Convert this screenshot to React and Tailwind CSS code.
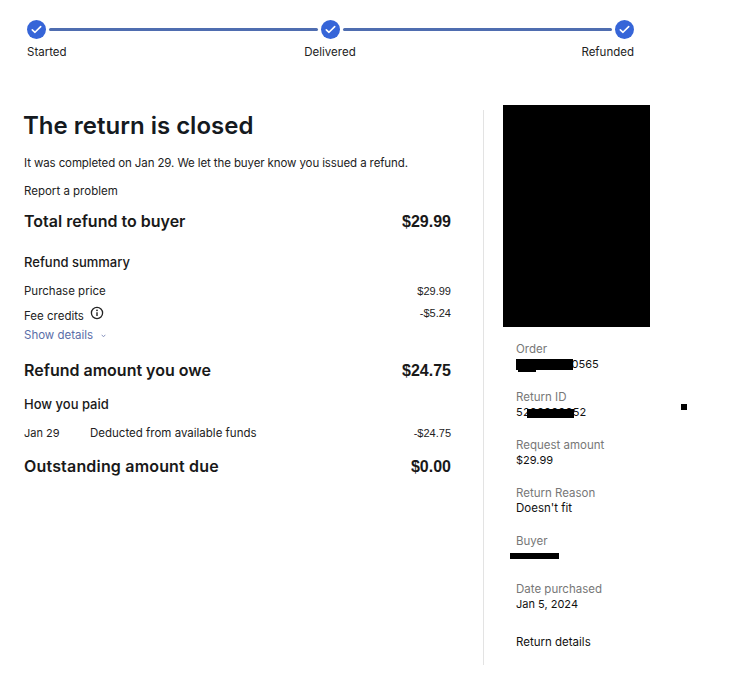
import React from "react";

function StepDot() {
  return (
    <div className="flex h-[19px] w-[19px] shrink-0 items-center justify-center rounded-full bg-[#3665d8]">
      <svg width="11" height="9" viewBox="0 0 11 9" fill="none">
        <path d="M1.3 4.8 L4 7.3 L9.7 1.6" stroke="#fff" strokeWidth="1.6" strokeLinecap="round" strokeLinejoin="round" />
      </svg>
    </div>
  );
}

function Stepper() {
  return (
    <div className="pl-[27px] pt-5 w-[634px] box-content">
      <div className="flex items-center w-[607px]">
        <StepDot />
        <div className="mx-[3px] h-[3px] flex-1 rounded-full bg-[#4f6db0]" />
        <StepDot />
        <div className="mx-[3px] h-[3px] flex-1 rounded-full bg-[#4f6db0]" />
        <StepDot />
      </div>
      <div className="mt-[6px] flex w-[607px] justify-between text-[11.5px] leading-[14px] text-[#222]">
        <span>Started</span>
        <span className="ml-[12px]">Delivered</span>
        <span>Refunded</span>
      </div>
    </div>
  );
}

function TotalRow({ label, amount, wide }) {
  return (
    <div className="flex items-center justify-between">
      <span className={wide ? "text-[16px] font-semibold leading-5 tracking-[0.18px] text-[#191919]" : "text-[16px] font-semibold leading-5 text-[#191919]"}>
        {label}
      </span>
      <span className="translate-y-[1px] font-['Liberation_Sans'] text-[16px] font-bold leading-5 text-[#191919]">{amount}</span>
    </div>
  );
}

function Detail({ label, numeric, children }) {
  return (
    <div className="h-[48px]">
      <div className="text-[11.5px] leading-[15px] text-[#777]">{label}</div>
      <div className={numeric ? "text-[11px] leading-[15px] text-[#111]" : "text-[11.5px] leading-[15px] text-[#111]"}>
        {children}
      </div>
    </div>
  );
}

function Redact({ className }) {
  return <span className={"absolute bg-black " + className} />;
}

export default function App() {
  return (
    <div className="relative h-[675px] w-[740px] overflow-hidden bg-white font-['Inter',sans-serif]">
      <Stepper />

      <div className="mt-[46px] flex">
        {/* main column */}
        <div className="ml-6 w-[427px] text-[11.5px] text-[#222]">
          <h1 className="ml-[-1px] mt-[6px] text-[24px] font-semibold leading-[30px] text-[#151a1f]">The return is closed</h1>
          <p className="mt-[14px] leading-4 tracking-[-0.11px]">It was completed on Jan 29. We let the buyer know you issued a refund.</p>
          <p className="mt-[12px] leading-4">Report a problem</p>
          <div className="mt-[12px]">
            <TotalRow label="Total refund to buyer" amount="$29.99" />
          </div>
          <h2 className="mt-[22px] text-[13px] font-medium leading-[18px] text-[#191919]">Refund summary</h2>
          <div className="mt-[12px] flex justify-between leading-4">
            <span>Purchase price</span>
            <span className="font-['Liberation_Sans'] text-[11px]">$29.99</span>
          </div>
          <div className="mt-[6px] flex justify-between leading-4">
            <span className="flex items-center gap-[6px]">
              <span className="translate-y-[1px] pt-[2px]">Fee credits</span>
              <svg width="14" height="14" viewBox="0 0 14 14" fill="none" className="mt-[-3px]">
                <circle cx="7" cy="7" r="5.6" stroke="#222" strokeWidth="1.3" />
                <path d="M7 6.2 V10" stroke="#222" strokeWidth="1.4" />
                <circle cx="7" cy="4.3" r="0.9" fill="#222" />
              </svg>
            </span>
            <span className="font-['Liberation_Sans'] text-[11px]">-$5.24</span>
          </div>
          <div className="mt-[4px] flex items-center gap-[8px] leading-4 text-[#5a6ea8]">
            <span>Show details</span>
            <svg width="5" height="4" viewBox="0 0 5 4" fill="none" className="mt-[2px]">
              <path d="M0.7 0.8 L2.5 2.8 L4.3 0.8" stroke="#7a88b8" strokeWidth="0.9" />
            </svg>
          </div>
          <div className="mt-[17px]">
            <TotalRow label="Refund amount you owe" amount="$24.75" />
          </div>
          <h2 className="mt-[15px] text-[13px] font-medium leading-[18px] text-[#191919]">How you paid</h2>
          <div className="mt-[12px] flex leading-4">
            <span className="w-[66px] text-[11px]">Jan 29</span>
            <span className="flex-1">Deducted from available funds</span>
            <span className="font-['Liberation_Sans'] text-[11px]">-$24.75</span>
          </div>
          <div className="mt-[15px]">
            <TotalRow label="Outstanding amount due" amount="$0.00" wide />
          </div>
        </div>

        {/* side column */}
        <div className="ml-[32px] mt-[5px] h-[555px] w-px bg-[#e3e3e3]" />
        <div className="ml-[19px]">
          <div className="h-[222px] w-[147px] bg-black" />
          <div className="ml-[13px] mt-[15px]">
            <Detail label="Order" numeric>
              <span className="relative">
                000000000565
                <Redact className="left-0 top-[2px] h-[11px] w-[57px]" />
                <Redact className="left-[2px] top-[8px] h-[7px] w-[18px]" />
              </span>
            </Detail>
            <Detail label="Return ID" numeric>
              <span className="relative tracking-[0.2px]">
                5200000052
                <Redact className="left-[11px] top-[4px] h-[9px] w-[47px]" />
              </span>
            </Detail>
            <Detail label="Request amount" numeric>$29.99</Detail>
            <Detail label="Return Reason">Doesn't fit</Detail>
            <Detail label="Buyer">
              <span className="relative">
                <span className="opacity-0">buyer</span>
                <Redact className="left-[-6px] top-[4px] h-[6px] w-[49px]" />
              </span>
            </Detail>
            <Detail label="Date purchased" numeric>Jan 5, 2024</Detail>
            <p className="mt-[5px] text-[11.5px] leading-[15px] text-[#111]">Return details</p>
          </div>
        </div>
      </div>

      {/* stray redaction mark */}
      <span className="absolute left-[681px] top-[404px] h-[6px] w-[6px] bg-black" />
    </div>
  );
}
